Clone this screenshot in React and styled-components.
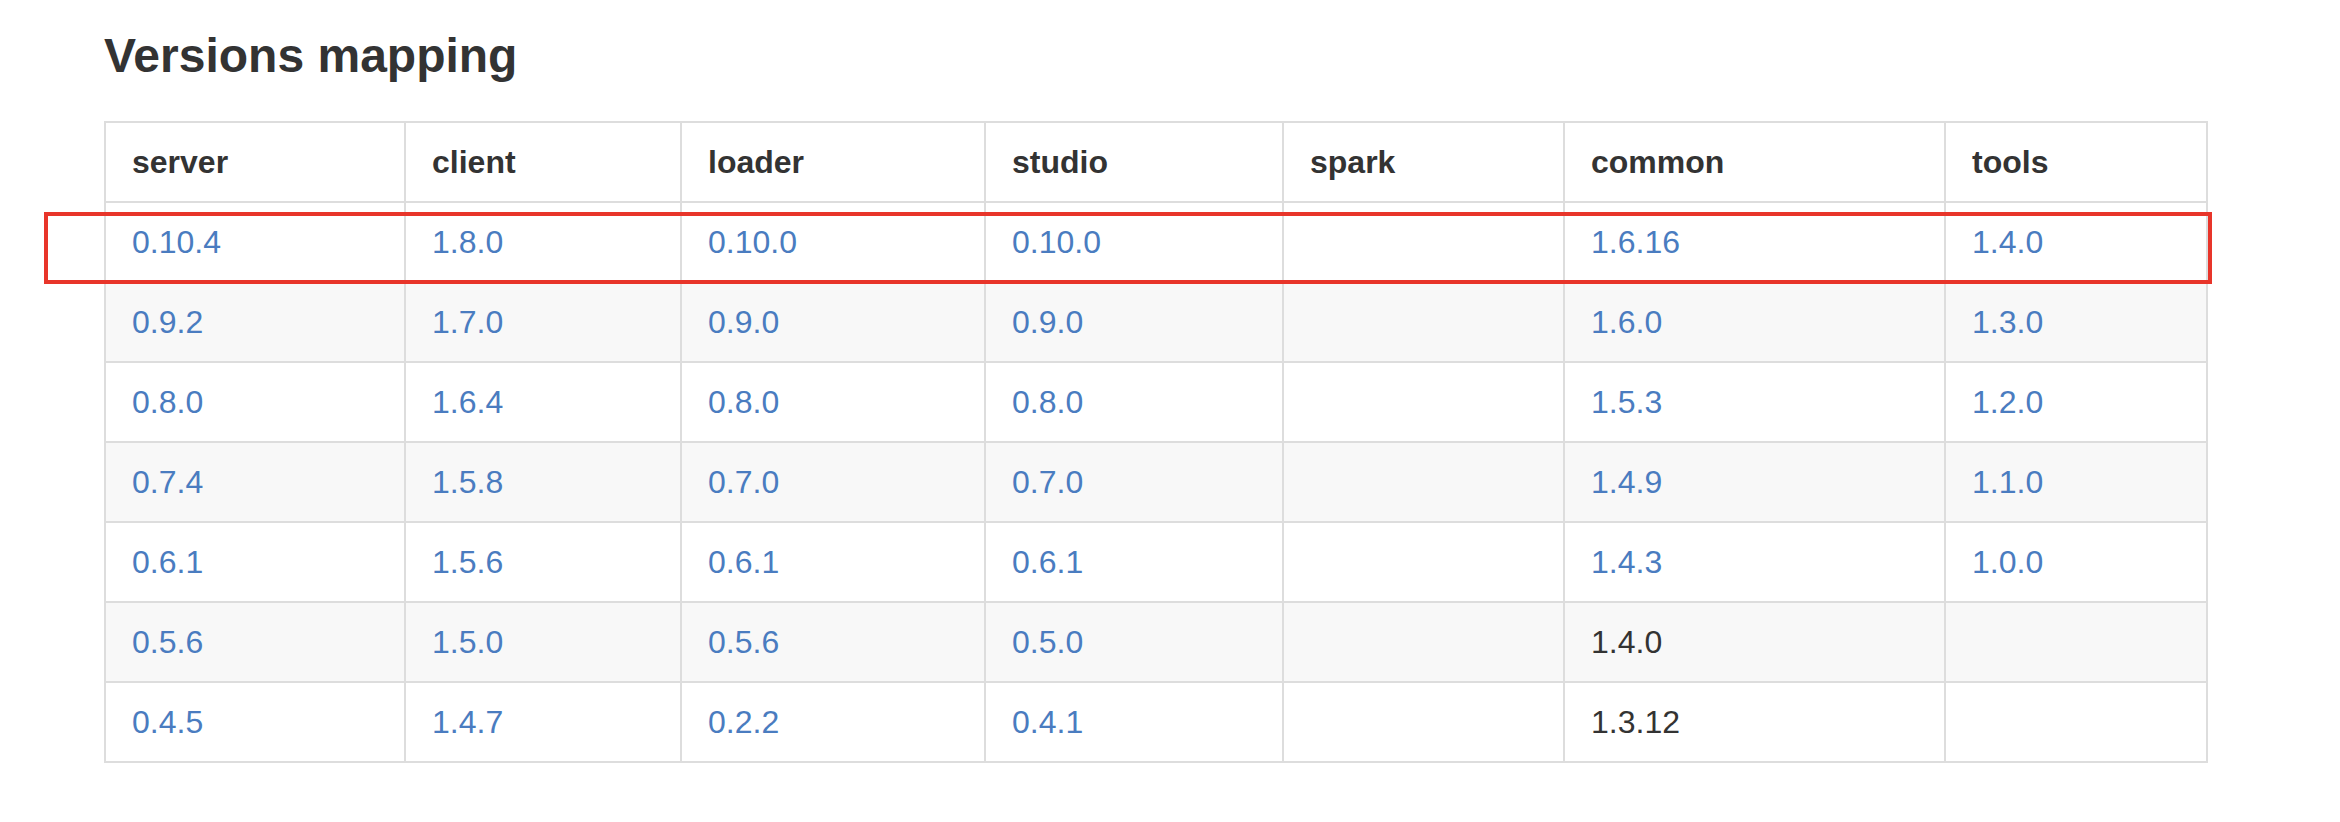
import React from "react";
import styled, { createGlobalStyle } from "styled-components";

const Global = createGlobalStyle`
  html, body { margin: 0; padding: 0; background: #fff; }
  body { font-family: "Liberation Sans", Arial, sans-serif; color: #333; }
`;

const Page = styled.div`
  position: relative;
  width: 2340px;
  height: 822px;
  padding: 30px 0 0 104px;
  box-sizing: border-box;
`;

const Title = styled.h2`
  margin: 0 0 38px 0;
  font-size: 48px;
  line-height: 52.8px;
  font-weight: 700;
  color: #333;
`;

const Table = styled.table`
  border-collapse: collapse;
  border-spacing: 0;
  table-layout: fixed;
  width: 2102px;
  font-size: 32px;
  line-height: 46px;
`;

const HeadCell = styled.th`
  text-align: left;
  font-weight: 700;
  color: #333;
  padding: 16px 26px;
  border: 2px solid #ddd;
  white-space: nowrap;
`;

const Row = styled.tr`
  background: ${(p) => (p.$striped ? "#f8f8f8" : "#fff")};
`;

const Cell = styled.td`
  padding: 16px 26px;
  border: 2px solid #ddd;
  color: #333;
  white-space: nowrap;
`;

const VersionLink = styled.a`
  color: #4a7cc0;
  text-decoration: none;
`;

const Highlight = styled.div`
  position: absolute;
  left: 44px;
  top: 212px;
  width: 2168px;
  height: 72px;
  box-sizing: border-box;
  border: 4px solid #e8352a;
  pointer-events: none;
`;

const columns = [
  { name: "server", width: 300 },
  { name: "client", width: 276 },
  { name: "loader", width: 304 },
  { name: "studio", width: 298 },
  { name: "spark", width: 281 },
  { name: "common", width: 381 },
  { name: "tools", width: 262 },
];

// string = link, {t} = plain text
const rows = [
  ["0.10.4", "1.8.0", "0.10.0", "0.10.0", "", "1.6.16", "1.4.0"],
  ["0.9.2", "1.7.0", "0.9.0", "0.9.0", "", "1.6.0", "1.3.0"],
  ["0.8.0", "1.6.4", "0.8.0", "0.8.0", "", "1.5.3", "1.2.0"],
  ["0.7.4", "1.5.8", "0.7.0", "0.7.0", "", "1.4.9", "1.1.0"],
  ["0.6.1", "1.5.6", "0.6.1", "0.6.1", "", "1.4.3", "1.0.0"],
  ["0.5.6", "1.5.0", "0.5.6", "0.5.0", "", { t: "1.4.0" }, ""],
  ["0.4.5", "1.4.7", "0.2.2", "0.4.1", "", { t: "1.3.12" }, ""],
];

function renderValue(v) {
  if (!v) return null;
  if (typeof v === "object") return v.t;
  return <VersionLink href="#">{v}</VersionLink>;
}

export default function App() {
  return (
    <>
      <Global />
      <Page>
        <Title>Versions mapping</Title>
        <Table>
          <colgroup>
            {columns.map((c) => (
              <col key={c.name} style={{ width: c.width }} />
            ))}
          </colgroup>
          <thead>
            <tr>
              {columns.map((c) => (
                <HeadCell key={c.name}>{c.name}</HeadCell>
              ))}
            </tr>
          </thead>
          <tbody>
            {rows.map((r, i) => (
              <Row key={i} $striped={i % 2 === 1}>
                {r.map((v, j) => (
                  <Cell key={j}>{renderValue(v)}</Cell>
                ))}
              </Row>
            ))}
          </tbody>
        </Table>
        <Highlight />
      </Page>
    </>
  );
}
